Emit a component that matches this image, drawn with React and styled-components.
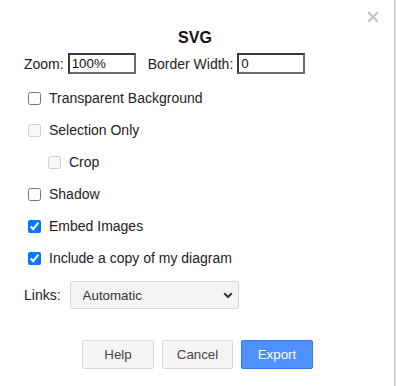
import React from "react";
import styled, { createGlobalStyle } from "styled-components";

const Global = createGlobalStyle`
  html, body { margin: 0; padding: 0; background: #fff; }
  body { font-family: "Liberation Sans", Arial, sans-serif; }
`;

const Dialog = styled.div`
  position: relative;
  box-sizing: border-box;
  width: 395px;
  height: 386px;
  background: #fff;
  border-right: 1px solid #c9c9c9;
  box-shadow: 1px 0 0 #e4e4e4;
  padding-top: 28px;
  padding-right: 4px;
  color: #222;
  font-size: 14px;
`;

const Close = styled.button`
  position: absolute;
  top: 11px;
  right: 15px;
  width: 12px;
  height: 12px;
  padding: 0;
  border: 0;
  background: transparent;
  display: flex;
  align-items: center;
  justify-content: center;
  cursor: pointer;
`;

const Title = styled.h2`
  margin: 0;
  font-size: 16px;
  line-height: 20px;
  font-weight: bold;
  text-align: center;
  color: #111;
`;

const ZoomRow = styled.div`
  margin-top: 5px;
  padding-left: 24px;
  display: flex;
  align-items: center;
  height: 21px;
  white-space: pre;
`;

const Field = styled.label`
  display: flex;
  align-items: center;
  margin-right: ${(p) => p.$gap || 0}px;
`;

const TextInput = styled.input`
  box-sizing: border-box;
  width: 68px;
  height: 21px;
  margin-left: 4px;
  padding: 1px 2px;
  border: 2px solid #3a3a3a;
  border-right-color: #6a6a6a;
  border-bottom-color: #6a6a6a;
  font-family: "Liberation Sans", Arial, sans-serif;
  font-size: 13.333px;
  color: #111;
  outline: none;
`;

const Options = styled.div`
  margin-top: 8px;
  display: flex;
  flex-direction: column;
`;

const CheckRow = styled.label`
  display: flex;
  align-items: center;
  height: 32px;
  padding-left: ${(p) => 28 + (p.$indent ? 20 : 0)}px;
  gap: 8px;
`;

const Check = styled.input.attrs({ type: "checkbox" })`
  margin: 0;
  width: 13px;
  height: 13px;
`;

const LinksRow = styled.div`
  margin-top: 7px;
  padding-left: 24px;
  display: flex;
  align-items: center;
  gap: 8px;
`;

const SelectWrap = styled.div`
  position: relative;
  width: 169px;
  height: 28px;
  margin-left: 1px;
`;

const Select = styled.select`
  appearance: none;
  box-sizing: border-box;
  width: 100%;
  height: 100%;
  padding: 0 0 0 12px;
  border: 1px solid #d6d6d6;
  border-radius: 2px;
  background: #f3f3f3;
  font-family: "Liberation Sans", Arial, sans-serif;
  font-size: 13.333px;
  color: #333;
  outline: none;
`;

const Chevron = styled.svg`
  position: absolute;
  right: 6px;
  top: 11px;
  pointer-events: none;
`;

const Buttons = styled.div`
  margin-top: 31px;
  padding-left: 5px;
  display: flex;
  justify-content: center;
  gap: 8px;
`;

const Button = styled.button`
  box-sizing: border-box;
  width: ${(p) => p.$w || 72}px;
  height: 29px;
  border-radius: 2px;
  border: 1px solid ${(p) => (p.$primary ? "#3079ed" : "#d8d8d8")};
  background: ${(p) => (p.$primary ? "#4d90fe" : "#f5f5f5")};
  color: ${(p) => (p.$primary ? "#fff" : "#444")};
  font-family: "Liberation Sans", Arial, sans-serif;
  font-size: 13.333px;
  font-weight: normal;
  padding: 0;
  cursor: pointer;
`;

export default function App() {
  return (
    <>
      <Global />
      <Dialog>
        <Close aria-label="Close">
          <svg width="10" height="10" viewBox="0 0 10 10">
            <path d="M1 1L9 9M9 1L1 9" stroke="#b4c3d6" strokeWidth="2" strokeLinecap="square" />
          </svg>
        </Close>
        <Title>SVG</Title>
        <ZoomRow>
          <Field $gap={12}>
            Zoom:
            <TextInput defaultValue="100%" />
          </Field>
          <Field>
            Border Width:
            <TextInput defaultValue="0" />
          </Field>
        </ZoomRow>
        <Options>
          <CheckRow>
            <Check />
            Transparent Background
          </CheckRow>
          <CheckRow>
            <Check disabled />
            Selection Only
          </CheckRow>
          <CheckRow $indent>
            <Check disabled />
            Crop
          </CheckRow>
          <CheckRow>
            <Check />
            Shadow
          </CheckRow>
          <CheckRow>
            <Check defaultChecked />
            Embed Images
          </CheckRow>
          <CheckRow>
            <Check defaultChecked />
            Include a copy of my diagram
          </CheckRow>
        </Options>
        <LinksRow>
          <span>Links:</span>
          <SelectWrap>
            <Select defaultValue="auto">
              <option value="auto">Automatic</option>
              <option value="blank">Open in New Window</option>
              <option value="self">Open in Same Window</option>
            </Select>
            <Chevron width="10" height="7" viewBox="0 0 10 7">
              <path d="M1.2 1.2L5 5L8.8 1.2" fill="none" stroke="#333" strokeWidth="2" />
            </Chevron>
          </SelectWrap>
        </LinksRow>
        <Buttons>
          <Button>Help</Button>
          <Button $w={71}>Cancel</Button>
          <Button $primary>Export</Button>
        </Buttons>
      </Dialog>
    </>
  );
}
